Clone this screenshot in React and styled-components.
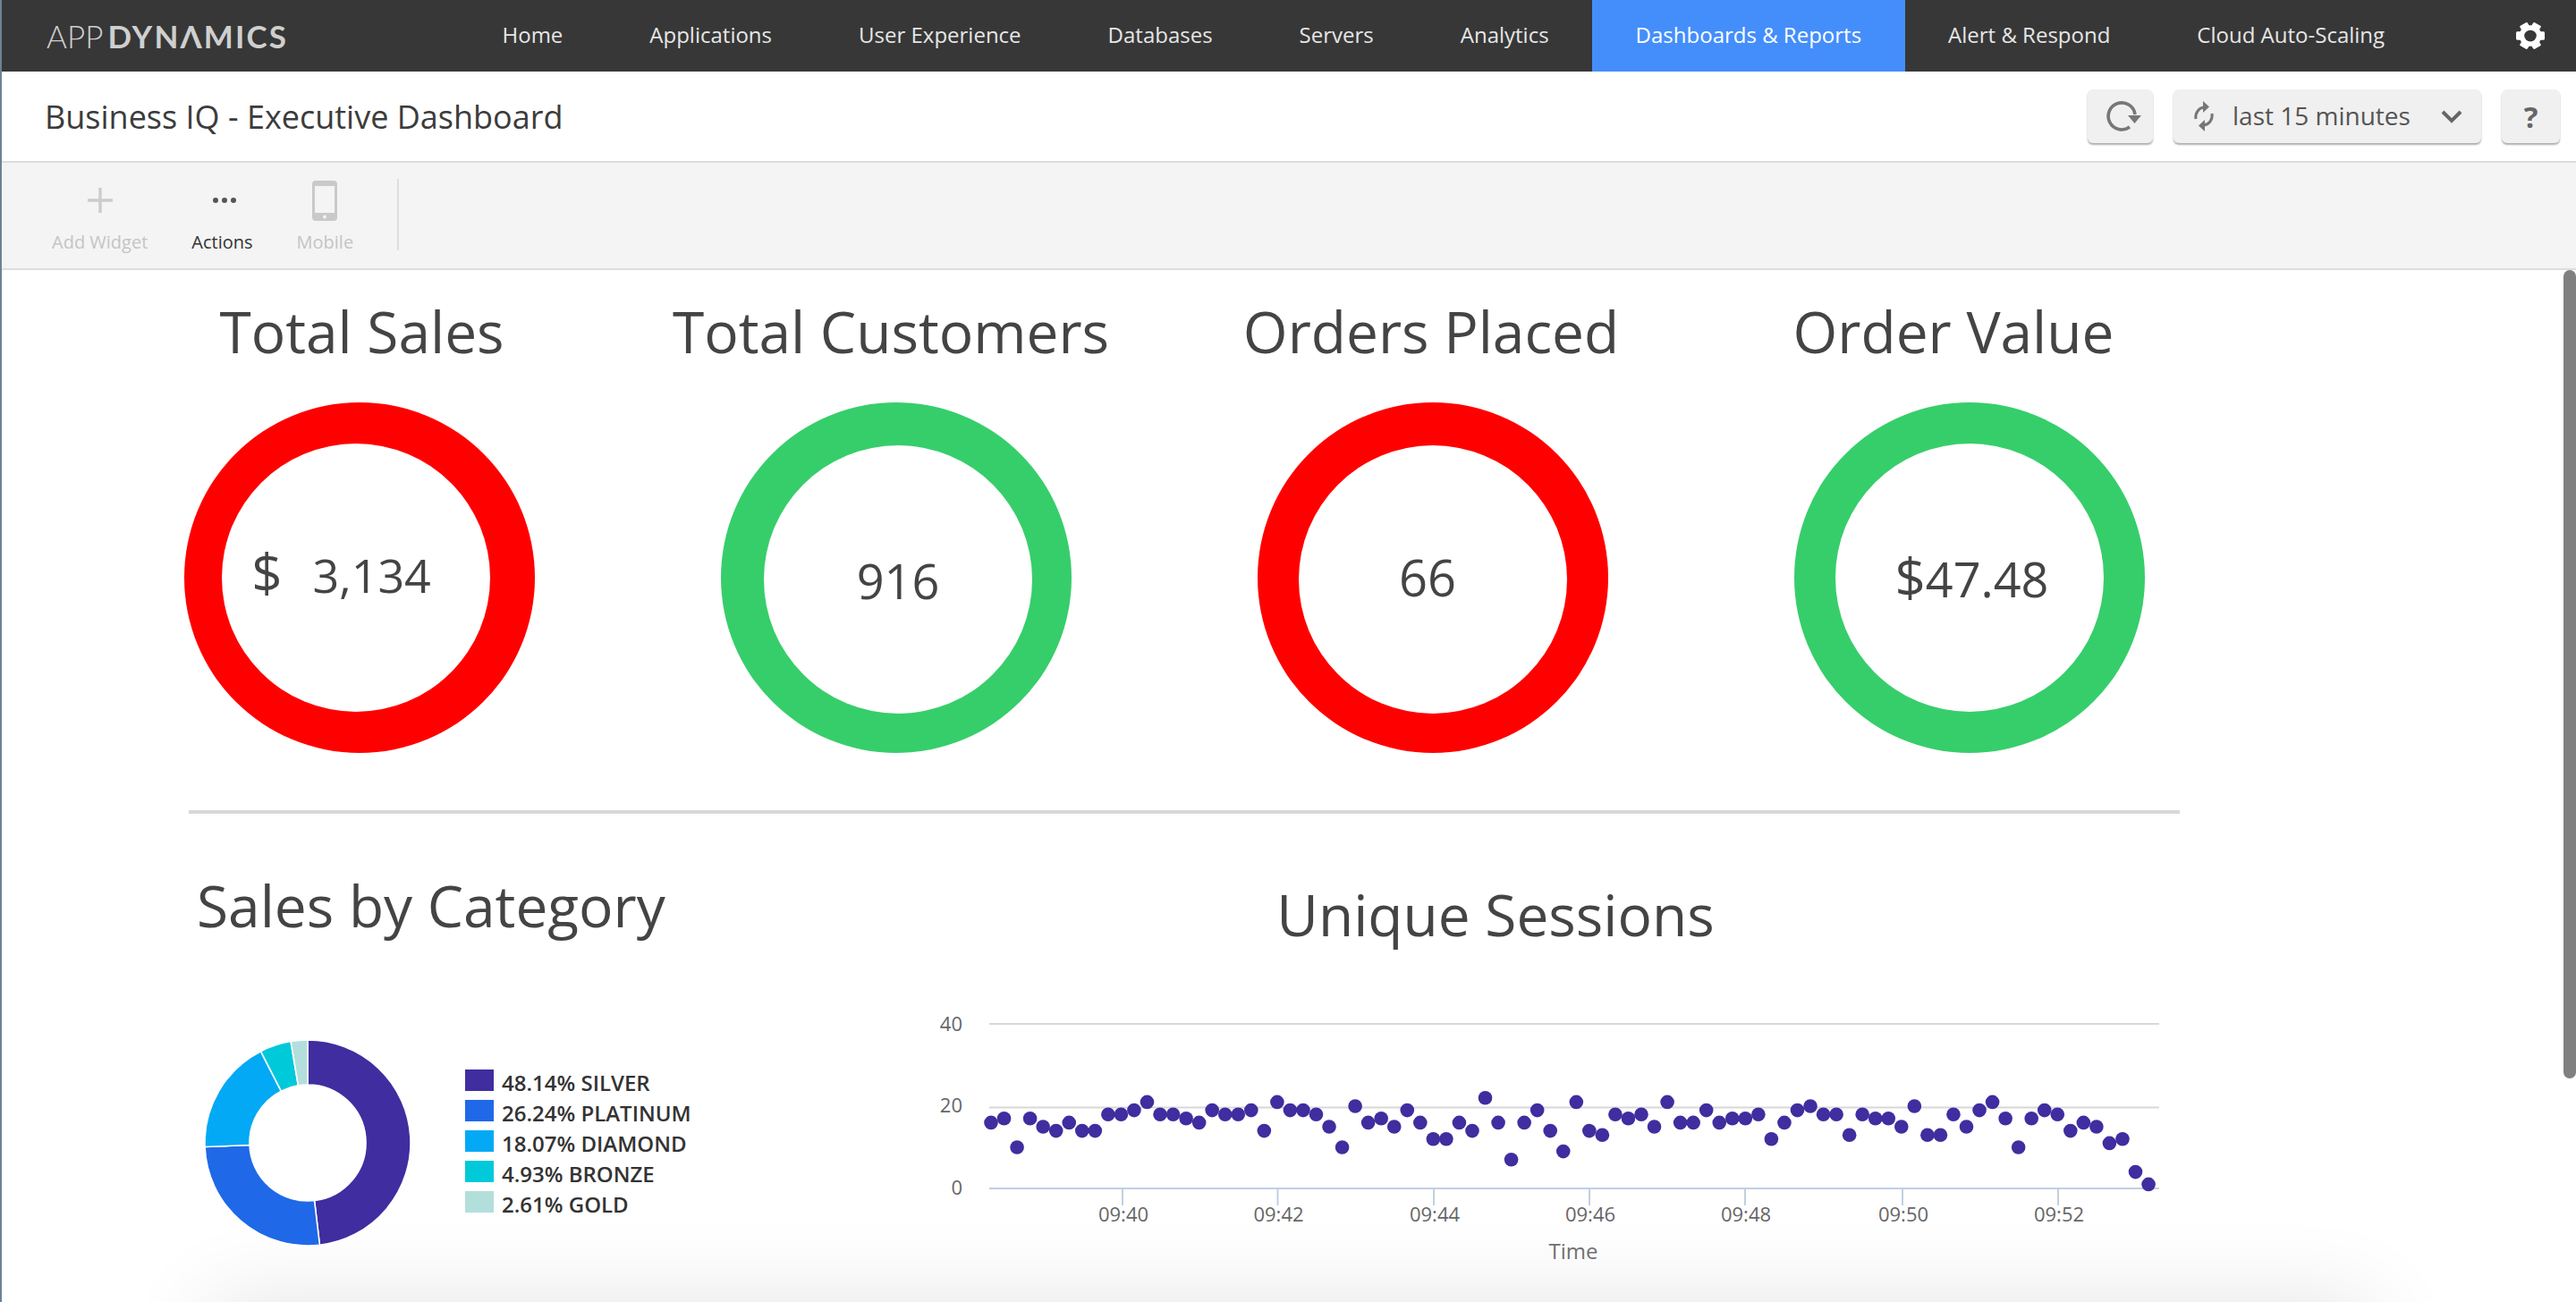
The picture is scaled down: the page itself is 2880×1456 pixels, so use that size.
import React from 'react';
import styled, { createGlobalStyle } from 'styled-components';

const Global = createGlobalStyle`
  html, body { margin: 0; padding: 0; background: #fff; }
  * { box-sizing: border-box; }
  body { font-family: "Open Sans", "Liberation Sans", sans-serif; color: #444; }
`;

const Page = styled.div`
  width: 100%;
  height: 100vh;
  display: flex;
  flex-direction: column;
  overflow: hidden;
  border-left: 2px solid #6f8296;
  background: #fff;
`;

const TopNav = styled.nav`
  height: 80px;
  flex: none;
  display: flex;
  background: #373737;
  padding-left: 50px;
`;
const LogoBox = styled.div`
  width: 461px;
  flex: none;
  display: flex;
  align-items: center;
  height: 80px;
`;
const Logo = styled.div`
  font-family: Lato, "Open Sans", sans-serif;
  font-size: 35px;
  line-height: 1;
  color: #cfcfcf;
  white-space: nowrap;
`;
const LogoThin = styled.span`
  font-weight: 300;
  letter-spacing: 0;
  margin-right: 5px;
`;
const LogoBold = styled.span`
  font-weight: 700;
  letter-spacing: 2.1px;
`;
const NavItem = styled.a`
  display: block;
  height: 80px;
  padding: 0 48.5px 2px;
  line-height: 78px;
  font-size: 24px;
  white-space: nowrap;
  color: ${p => (p.$active ? '#fff' : '#e6e6e6')};
  background: ${p => (p.$active ? '#448efb' : 'transparent')};
`;
const GearSlot = styled.div`
  margin-left: auto;
  padding-right: 35px;
  display: flex;
  align-items: center;
`;

const TitleBar = styled.header`
  height: 102px;
  flex: none;
  display: flex;
  justify-content: space-between;
  padding: 20px 18px 0 48px;
  border-bottom: 2px solid #dddddd;
`;
const PageTitle = styled.h1`
  margin: 0;
  font-size: 36px;
  font-weight: 400;
  line-height: 62px;
  color: #3c3c3c;
`;
const Controls = styled.div`
  display: flex;
  gap: 23px;
`;
const ControlButton = styled.div`
  width: ${p => p.$w}px;
  height: 60px;
  display: flex;
  align-items: center;
  justify-content: ${p => (p.$spread ? 'flex-start' : 'center')};
  padding: ${p => (p.$spread ? '0 21px 0 22px' : '0')};
  background: #f0f0f0;
  border-radius: 6px;
  box-shadow: 0 2px 2px rgba(0, 0, 0, 0.32);
  color: #555;
`;
const RangeLabel = styled.span`
  font-size: 28px;
  line-height: 58px;
  height: 60px;
  margin-left: 20px;
  white-space: nowrap;
`;
const Chevron = styled.svg`
  margin-left: auto;
`;
const HelpMark = styled.span`
  font-size: 33px;
  font-weight: 700;
  color: #666;
`;

const Toolbar = styled.div`
  height: 120px;
  flex: none;
  display: flex;
  gap: 49px;
  padding: 20px 0 0 56px;
  background: #f4f4f4;
  border-bottom: 2px solid #dddddd;
`;
const Tool = styled.div`
  display: flex;
  flex-direction: column;
  align-items: center;
`;
const ToolIcon = styled.div`
  height: 46px;
  display: flex;
  align-items: center;
  justify-content: center;
  margin-top: -1px;
`;
const ToolLabel = styled.span`
  margin-top: 10px;
  font-size: 20px;
  line-height: 27px;
  color: ${p => (p.$on ? '#333' : '#c4c4c4')};
  white-space: nowrap;
`;
const ToolDivider = styled.div`
  width: 2px;
  height: 80px;
  margin-top: -2px;
  background: #dddddd;
`;

const Content = styled.main`
  flex: 1;
  min-height: 0;
  position: relative;
  overflow: hidden;
`;
const ScrollThumb = styled.div`
  position: absolute;
  top: 0;
  right: 0;
  width: 14px;
  height: 904px;
  border-radius: 7px;
  background: #808080;
`;

const KpiRow = styled.section`
  display: grid;
  grid-template-columns: repeat(4, 600px);
  padding: 25px 0 0 100px;
`;
const Kpi = styled.div`
  display: flex;
  flex-direction: column;
  align-items: center;
`;
const KpiTitle = styled.h2`
  margin: 0 0 35px;
  width: 100%;
  padding-left: ${p => p.$pl || 0}px;
  padding-right: ${p => p.$pr || 0}px;
  font-size: 64px;
  font-weight: 400;
  line-height: 88px;
  text-align: center;
  white-space: nowrap;
  color: #444;
`;
const Ring = styled.div`
  width: 392px;
  height: 392px;
  border-radius: 50%;
  display: flex;
  align-items: center;
  justify-content: center;
  background: ${p => p.$color};
`;
const RingHole = styled.div`
  width: 300px;
  height: 300px;
  border-radius: 50%;
  background: #fff;
  display: flex;
  align-items: center;
  justify-content: center;
  margin: ${p => p.$mt || 0}px 0 0 ${p => p.$ml || 0}px;
`;
const RingValue = styled.div`
  font-size: ${p => p.$size || 54}px;
  line-height: 70px;
  color: #444;
  white-space: nowrap;
  margin: ${p => p.$mt || 0}px 0 0 ${p => p.$ml || 0}px;
`;
const Currency = styled.span`
  font-size: 60px;
  margin-right: ${p => p.$gap || 0}px;
`;

const Rule = styled.hr`
  width: 2226px;
  height: 4px;
  margin: 64px 0 0 209px;
  border: 0;
  background: #d8d8d8;
`;

const ChartRow = styled.section`
  display: flex;
  height: 546px;
`;
const CategoryPanel = styled.div`
  width: 822px;
  margin-left: 216px;
  padding-top: 59px;
  flex: none;
`;
const SessionsPanel = styled.div`
  width: 1400px;
  padding-top: 69px;
  flex: none;
`;
const ChartTitle = styled.h2`
  margin: 0 0 ${p => p.$mb || 0}px ${p => p.$ml || 0}px;
  font-size: 64px;
  font-weight: 400;
  line-height: 88px;
  color: #444;
  white-space: nowrap;
  text-align: ${p => (p.$center ? 'center' : 'left')};
  padding-right: ${p => p.$pr || 0}px;
`;
const DonutWrap = styled.div`
  display: flex;
  margin: 106px 0 0 11px;
`;
const Legend = styled.ul`
  list-style: none;
  margin: 33px 0 0 61px;
  padding: 0;
  display: flex;
  flex-direction: column;
  gap: 10px;
`;
const LegendRow = styled.li`
  display: flex;
  gap: 9px;
  height: 24px;
`;
const Swatch = styled.span`
  width: 32px;
  height: 24px;
  background: ${p => p.$color};
`;
const LegendText = styled.span`
  font-size: 24px;
  font-weight: 600;
  line-height: 30px;
  color: #333;
  white-space: nowrap;
`;
const NextCard = styled.div`
  height: 200px;
  margin: 0 230px 0 233px;
  background: #f2f2f2;
  box-shadow: 0 0 100px rgba(0, 0, 0, 0.11);
`;
const ScatterFrame = styled.svg`
  display: block;
`;
const AxisText = styled.text`
  font-family: "Open Sans", "Liberation Sans", sans-serif;
  font-size: ${p => p.$size || 22}px;
  fill: ${p => p.$fill || '#666'};
`;

const Gear = () => (
  <svg width="32" height="30" viewBox="-16 -16 32 32" preserveAspectRatio="none">
    {[0, 60, 120].map(a => (
      <rect key={a} x="-16" y="-5" width="32" height="10" rx="1.5" fill="#fff" transform={`rotate(${a})`} />
    ))}
    <circle r="12.5" fill="#fff" />
    <circle r="6.8" fill="#373737" />
  </svg>
);

const Reload = () => (
  <svg width="46" height="36" viewBox="0 0 46 36">
    <path d="M39 16A15 15 0 1 0 33 30" fill="none" stroke="#777" strokeWidth="3.6" />
    <path d="M31 17H46L38.5 26Z" fill="#777" />
  </svg>
);

const Sync = () => (
  <svg width="24" height="34" viewBox="0 0 24 34">
    <path d="M3 20A10 11 0 0 1 12 7" fill="none" stroke="#777" strokeWidth="3" />
    <path d="M11 0L18 6.5L11 13Z" fill="#777" />
    <path d="M21 14A10 11 0 0 1 12 27" fill="none" stroke="#777" strokeWidth="3" />
    <path d="M13 21L6 27.5L13 34Z" fill="#777" />
  </svg>
);

const ChevronIcon = () => (
  <Chevron width="24" height="16" viewBox="0 0 24 16">
    <path d="M2 3L12 13L22 3" fill="none" stroke="#666" strokeWidth="4" />
  </Chevron>
);

const Plus = () => (
  <svg width="28" height="28" viewBox="0 0 28 28">
    <path d="M14 0V28M0 14H28" stroke="#cccccc" strokeWidth="3.4" />
  </svg>
);

const Dots = () => (
  <svg width="31" height="6" viewBox="0 0 31 6">
    <circle cx="8" cy="3" r="3" fill="#555" />
    <circle cx="18" cy="3" r="3" fill="#555" />
    <circle cx="28" cy="3" r="3" fill="#555" />
  </svg>
);

const Phone = () => (
  <svg width="28" height="45" viewBox="0 0 28 45">
    <rect width="28" height="45" rx="4" fill="#c9c9c9" />
    <rect x="3" y="6" width="22" height="30" fill="#f4f4f4" />
    <circle cx="14" cy="40.5" r="2" fill="#f4f4f4" />
  </svg>
);

const slices = [
  { value: 48.14, name: 'SILVER', color: '#402d9f' },
  { value: 26.24, name: 'PLATINUM', color: '#1f69e8' },
  { value: 18.07, name: 'DIAMOND', color: '#03a9f5' },
  { value: 4.93, name: 'BRONZE', color: '#00c9d9' },
  { value: 2.61, name: 'GOLD', color: '#b2dfdc' },
];

const polar = (r, t) => {
  const a = (t * 2 * Math.PI) / 100 - Math.PI / 2;
  return `${(115 + r * Math.cos(a)).toFixed(2)} ${(115 + r * Math.sin(a)).toFixed(2)}`;
};

const Donut = () => {
  let at = 0;
  return (
    <svg width="230" height="230" viewBox="0 0 230 230">
      {slices.map(s => {
        const from = at;
        at += s.value;
        const big = s.value > 50 ? 1 : 0;
        const d = `M${polar(115, from)}A115 115 0 ${big} 1 ${polar(115, at)}L${polar(65, at)}A65 65 0 ${big} 0 ${polar(65, from)}Z`;
        return <path key={s.name} d={d} fill={s.color} stroke="#fff" strokeWidth="1.6" />;
      })}
    </svg>
  );
};

const sessions = [
  16, 17, 10, 17, 15, 14, 16, 14, 14, 18, 18, 19, 21, 18, 18, 17, 16, 19, 18, 18, 19, 14, 21, 19, 19, 18, 15, 10, 20, 16,
  17, 15, 19, 16, 12, 12, 16, 14, 22, 16, 7, 16, 19, 14, 9, 21, 14, 13, 18, 17, 18, 15, 21, 16, 16, 19, 16, 17, 17, 18,
  12, 16, 19, 20, 18, 18, 13, 18, 17, 17, 15, 20, 13, 13, 18, 15, 19, 21, 17, 10, 17, 19, 18, 14, 16, 15, 11, 12, 4, 1,
];
const ticks = [
  ['09:40', 1255], ['09:42', 1428.5], ['09:44', 1603], ['09:46', 1777], ['09:48', 1951], ['09:50', 2127], ['09:52', 2301],
];

const Scatter = () => (
  <ScatterFrame width="1400" height="300" viewBox="1040 1120 1400 300">
    <line x1="1106" x2="2414" y1="1145" y2="1145" stroke="#d8d8d8" strokeWidth="2" />
    <line x1="1106" x2="2414" y1="1238.5" y2="1238.5" stroke="#d8d8d8" strokeWidth="2" />
    <line x1="1106" x2="2414" y1="1329" y2="1329" stroke="#c0d0e0" strokeWidth="2" />
    <AxisText x="1076" y="1153" textAnchor="end">40</AxisText>
    <AxisText x="1076" y="1244" textAnchor="end">20</AxisText>
    <AxisText x="1076" y="1336" textAnchor="end">0</AxisText>
    {ticks.map(([label, x]) => (
      <g key={label}>
        <line x1={x} x2={x} y1="1329" y2="1348" stroke="#c0d0e0" strokeWidth="2" />
        <AxisText x={x + 1} y="1366" textAnchor="middle">{label}</AxisText>
      </g>
    ))}
    <AxisText x="1759" y="1408" textAnchor="middle" $size={24} $fill="#707070">Time</AxisText>
    {sessions.map((v, i) => (
      <circle key={i} cx={1108 + i * 14.54} cy={1329 - v * 4.6} r="7.8" fill="#402d9f" />
    ))}
  </ScatterFrame>
);

const navItems = ['Home', 'Applications', 'User Experience', 'Databases', 'Servers', 'Analytics', 'Dashboards & Reports', 'Alert & Respond', 'Cloud Auto-Scaling'];

export default function App() {
  return (
    <>
      <Global />
      <Page>
        <TopNav>
          <LogoBox>
            <Logo><LogoThin>APP</LogoThin><LogoBold>DYNΛMICS</LogoBold></Logo>
          </LogoBox>
          {navItems.map(n => (
            <NavItem key={n} $active={n === 'Dashboards & Reports'}>{n}</NavItem>
          ))}
          <GearSlot><Gear /></GearSlot>
        </TopNav>
        <TitleBar>
          <PageTitle>Business IQ - Executive Dashboard</PageTitle>
          <Controls>
            <ControlButton $w={73}><Reload /></ControlButton>
            <ControlButton $w={344} $spread>
              <Sync />
              <RangeLabel>last 15 minutes</RangeLabel>
              <ChevronIcon />
            </ControlButton>
            <ControlButton $w={65}><HelpMark>?</HelpMark></ControlButton>
          </Controls>
        </TitleBar>
        <Toolbar>
          <Tool>
            <ToolIcon><Plus /></ToolIcon>
            <ToolLabel>Add Widget</ToolLabel>
          </Tool>
          <Tool>
            <ToolIcon><Dots /></ToolIcon>
            <ToolLabel $on>Actions</ToolLabel>
          </Tool>
          <Tool>
            <ToolIcon><Phone /></ToolIcon>
            <ToolLabel>Mobile</ToolLabel>
          </Tool>
          <ToolDivider />
        </Toolbar>
        <Content>
          <KpiRow>
            <Kpi>
              <KpiTitle $pl={5}>Total Sales</KpiTitle>
              <Ring $color="#ff0000">
                <RingHole $ml={-8}>
                  <RingValue $size={52} $ml={-33} $mt={-10}><Currency $gap={34}>$</Currency>3,134</RingValue>
                </RingHole>
              </Ring>
            </Kpi>
            <Kpi>
              <KpiTitle $pr={12}>Total Customers</KpiTitle>
              <Ring $color="#36ce6a">
                <RingHole $ml={4} $mt={4}>
                  <RingValue $mt={2}>916</RingValue>
                </RingHole>
              </Ring>
            </Kpi>
            <Kpi>
              <KpiTitle $pr={4}>Orders Placed</KpiTitle>
              <Ring $color="#ff0000">
                <RingHole $mt={4}>
                  <RingValue $size={56} $ml={-12} $mt={-7}>66</RingValue>
                </RingHole>
              </Ring>
            </Kpi>
            <Kpi>
              <KpiTitle $pr={36}>Order Value</KpiTitle>
              <Ring $color="#36ce6a">
                <RingHole $ml={-1}>
                  <RingValue $ml={6}><Currency>$</Currency>47.48</RingValue>
                </RingHole>
              </Ring>
            </Kpi>
          </KpiRow>
          <Rule />
          <ChartRow>
            <CategoryPanel>
              <ChartTitle $ml={2}>Sales by Category</ChartTitle>
              <DonutWrap>
                <Donut />
                <Legend>
                  {slices.map(s => (
                    <LegendRow key={s.name}>
                      <Swatch $color={s.color} />
                      <LegendText>{s.value.toFixed(2)}% {s.name}</LegendText>
                    </LegendRow>
                  ))}
                </Legend>
              </DonutWrap>
            </CategoryPanel>
            <SessionsPanel>
              <ChartTitle $center $pr={136} $mb={53}>Unique Sessions</ChartTitle>
              <Scatter />
            </SessionsPanel>
          </ChartRow>
          <NextCard />
          <ScrollThumb />
        </Content>
      </Page>
    </>
  );
}
